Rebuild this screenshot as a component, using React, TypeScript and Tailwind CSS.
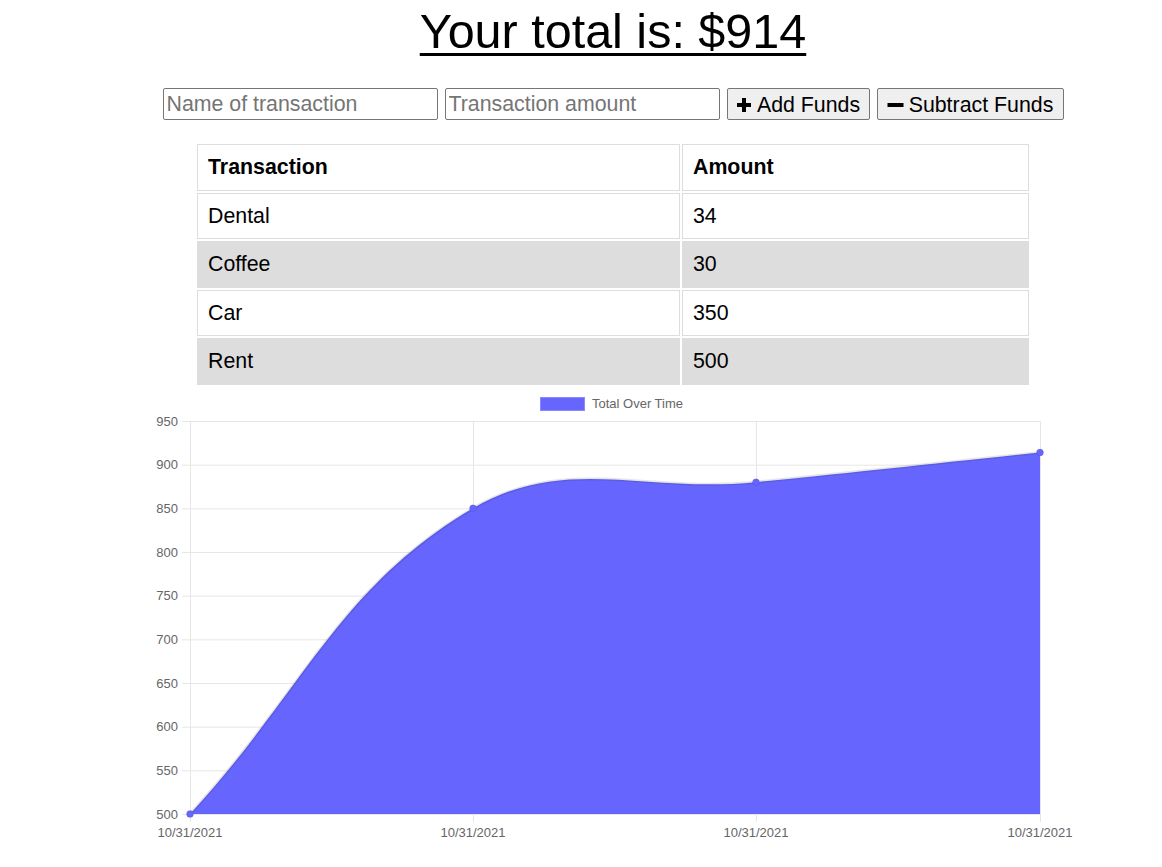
import { FC } from 'react';

const rows = [
  { name: 'Dental', amount: 34 },
  { name: 'Coffee', amount: 30 },
  { name: 'Car', amount: 350 },
  { name: 'Rent', amount: 500 },
];

const font = { fontFamily: '"Liberation Sans", Arial, sans-serif' };

// chart geometry in page coordinates
const left = 190;
const right = 1040;
const top = 421;
const bottom = 814;
const yOf = (v: number) => bottom - ((v - 500) * (bottom - top)) / 450;
const xTicks = [left, 473, 756, right];
const yTicks = [950, 900, 850, 800, 750, 700, 650, 600, 550, 500];
const points = [
  [190, yOf(500)],
  [473, yOf(850)],
  [756, yOf(880)],
  [1040, yOf(914)],
];

const curve =
  `M190,${yOf(500)} C303.2,691.7 338.4,587.3 473,${yOf(850)} ` +
  `C564.8,454.4 642.8,493.3 756,${yOf(880)} ` +
  `C869.6,470.9 926.4,464.3 1040,${yOf(914)}`;

const PlusIcon: FC = () => (
  <svg width="16" height="16" viewBox="0 0 16 16" className="shrink-0">
    <path d="M6 1h4v5h5v4h-5v5H6v-5H1V6h5z" fill="#000" />
  </svg>
);

const MinusIcon: FC = () => (
  <svg width="17" height="16" viewBox="0 0 17 16" className="shrink-0">
    <rect x="0.5" y="6" width="16" height="4" fill="#000" />
  </svg>
);

const Chart: FC = () => (
  <svg width="940" height="460" viewBox="140 390 940 460" className="block ml-[140px] mt-[3px]">
    {/* legend */}
    <rect x="540.5" y="397.5" width="44" height="13" fill="#6666ff" stroke="#8a8aff" />
    <text x="592" y="408" fontSize="13" fill="#666" style={font}>
      Total Over Time
    </text>

    {/* grid */}
    {yTicks.map((v) => (
      <line key={v} x1={182} x2={right} y1={yOf(v) + 0.5} y2={yOf(v) + 0.5} stroke="#e6e6e6" />
    ))}
    {xTicks.map((x) => (
      <line key={x} x1={x + 0.5} x2={x + 0.5} y1={top} y2={822} stroke="#e6e6e6" />
    ))}

    {/* area */}
    <path d={`${curve} L1040,${bottom} L190,${bottom} Z`} fill="#6666ff" />
    <path d={curve} fill="none" stroke="rgba(0,0,0,0.1)" strokeWidth="3" />
    {points.map(([x, y]) => (
      <circle key={x} cx={x} cy={y} r="3.5" fill="#6666ff" stroke="rgba(0,0,0,0.08)" />
    ))}

    {/* labels */}
    {yTicks.map((v) => (
      <text key={v} x={178} y={yOf(v) + 4.5} fontSize="13" fill="#666" textAnchor="end" style={font}>
        {v}
      </text>
    ))}
    {xTicks.map((x) => (
      <text key={x} x={x} y={837} fontSize="13" fill="#666" textAnchor="middle" style={font}>
        10/31/2021
      </text>
    ))}
  </svg>
);

export default function App() {
  return (
    <div className="min-h-screen bg-white text-black" style={font}>
      <div className="pl-16">
        <h1 className="pt-[4px] text-center text-[48.5px] leading-[55px] font-normal underline decoration-[3px] underline-offset-[5px]">
          Your total is: $914
        </h1>

        <div className="mt-[29px] flex justify-center gap-[7px] text-[21.33px]">
          <input
            placeholder="Name of transaction"
            className="h-[32px] w-[275px] rounded-[2px] border border-[#767676] px-[3px] placeholder:text-[#757575] outline-none"
          />
          <input
            placeholder="Transaction amount"
            className="h-[32px] w-[275px] rounded-[2px] border border-[#767676] px-[3px] placeholder:text-[#757575] outline-none"
          />
          <button className="flex h-[32px] w-[143px] items-center justify-center gap-[5px] rounded-[2px] border border-[#767676] bg-[#efefef] pt-[2px] leading-[1.15]">
            <PlusIcon />
            <span>Add Funds</span>
          </button>
          <button className="flex h-[32px] w-[187px] items-center justify-center gap-[5px] rounded-[2px] border border-[#767676] bg-[#efefef] pt-[2px] leading-[1.15]">
            <MinusIcon />
            <span>Subtract Funds</span>
          </button>
        </div>

        <table className="mx-auto mt-[22px] w-[836px] border-separate border-spacing-[2px] text-[21.33px] leading-[1.15]">
          <thead>
            <tr>
              <th className="w-[483px] border border-[#dddddd] p-[10px] text-left font-bold">Transaction</th>
              <th className="border border-[#dddddd] p-[10px] text-left font-bold">Amount</th>
            </tr>
          </thead>
          <tbody>
            {rows.map((r, i) => (
              <tr key={r.name} className={i % 2 === 1 ? 'bg-[#dddddd]' : ''}>
                <td className="border border-[#dddddd] p-[10px]">{r.name}</td>
                <td className="border border-[#dddddd] p-[10px]">{r.amount}</td>
              </tr>
            ))}
          </tbody>
        </table>
      </div>

      <Chart />
    </div>
  );
}
